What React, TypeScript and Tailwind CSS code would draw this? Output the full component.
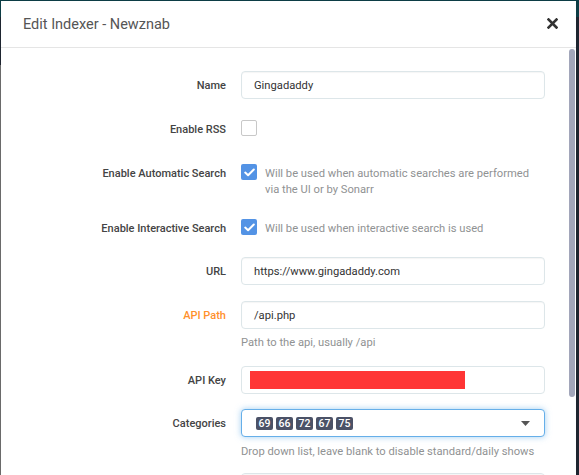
import React from "react";

const font = { fontFamily: "Roboto, 'Liberation Sans', sans-serif" };

function Label({ text, tall = true, orange = false }: { text: string; tall?: boolean; orange?: boolean }) {
  return (
    <div
      className={`w-[224px] shrink-0 pr-[15px] flex justify-end items-center font-medium text-[11px] ${
        tall ? "h-[28px] pt-[3px]" : "h-4 pt-[4px]"
      } ${orange ? "text-[#ff902b]" : "text-[#444]"}`}
    >
      {text}
    </div>
  );
}

function TextInput({ value, children }: { value?: string; children?: React.ReactNode }) {
  return (
    <div className="w-[304px] h-[28px] rounded-[4px] border border-[#dde6e9] shadow-[inset_0_1px_1px_rgba(0,0,0,0.04)] flex items-center px-3 pt-[3px] text-[11.2px] text-[#333] bg-white">
      {value}
      {children}
    </div>
  );
}

function Checkbox({ checked }: { checked: boolean }) {
  if (!checked)
    return <div className="w-4 h-4 shrink-0 rounded-[2px] border border-[#c8c8c8] bg-white" />;
  return (
    <div className="w-4 h-4 shrink-0 rounded-[2px] bg-[#5393e5] flex items-center justify-center">
      <svg width="11" height="9" viewBox="0 0 11 9">
        <path d="M1.2 4.6 L4.1 7.3 L9.8 1.5" fill="none" stroke="#fff" strokeWidth="2" strokeLinecap="round" strokeLinejoin="round" />
      </svg>
    </div>
  );
}

function Help({ text }: { text: string }) {
  return <div className="text-[11.2px] leading-4 text-[#909293]">{text}</div>;
}

export default function App() {
  const categories = ["69", "66", "72", "67", "75"];

  return (
    <div className="relative w-[579px] h-[475px] overflow-hidden bg-[#6a6a6a]" style={font}>
      {/* backdrop */}
      <div className="absolute left-0 top-0 w-full h-[17px] bg-[#0c3d45]" />
      <div className="absolute left-0 top-[17px] w-full h-[48px] bg-[#1e2530]" />
      <div className="absolute right-0 top-[17px] w-[3px] h-[460px] bg-[#1e2530]" />

      {/* modal */}
      <div className="absolute left-[1px] top-[1px] w-[575px] h-[480px] bg-white flex flex-col">
        <div className="h-[47px] shrink-0 border-b border-[#e5e5e5] flex items-center justify-between pl-[22px] pr-[18px]">
          <div className="text-[14.5px] text-[#555] mt-[2px]">Edit Indexer - Newznab</div>
          <svg width="11" height="11" viewBox="0 0 11 11" className="mt-[-1px]">
            <path d="M1.5 1.5 L9.5 9.5 M9.5 1.5 L1.5 9.5" stroke="#333" strokeWidth="2.6" strokeLinecap="square" />
          </svg>
        </div>

        <div className="relative flex-1">
          {/* scrollbar */}
          <div className="absolute right-[1px] top-[1px] w-[6px] h-[348px] rounded-[3px] bg-[#a2a6ba]" />

          <div className="pt-[23px] pl-[16px]">
            <div className="flex">
              <Label text="Name" />
              <TextInput value="Gingadaddy" />
            </div>

            <div className="flex mt-[21px] items-start">
              <Label text="Enable RSS" tall={false} />
              <Checkbox checked={false} />
            </div>

            <div className="flex mt-[28px] items-start">
              <Label text="Enable Automatic Search" tall={false} />
              <Checkbox checked />
              <div className="ml-2 pt-[2px] w-[280px] text-[11.2px] leading-4 text-[#909293]">
                Will be used when automatic searches are performed via the UI or by Sonarr
              </div>
            </div>

            <div className="flex mt-[21px] items-start">
              <Label text="Enable Interactive Search" tall={false} />
              <Checkbox checked />
              <div className="ml-2 pt-[2px] text-[11.2px] leading-4 text-[#909293]">
                Will be used when interactive search is used
              </div>
            </div>

            <div className="flex mt-[20px]">
              <Label text="URL" />
              <TextInput value="https://www.gingadaddy.com" />
            </div>

            <div className="flex mt-[16px]">
              <Label text="API Path" orange />
              <div className="flex flex-col gap-[6px]">
                <TextInput value="/api.php" />
                <Help text="Path to the api, usually /api" />
              </div>
            </div>

            <div className="flex mt-[15px]">
              <Label text="API Key" />
              <div className="w-[304px] h-[28px] rounded-[4px] border border-[#dde6e9] flex items-center pl-2 bg-white">
                <div className="w-[215px] h-[18px] bg-[#ff3535]" />
              </div>
            </div>

            <div className="flex mt-[15px]">
              <Label text="Categories" />
              <div className="flex flex-col gap-[7px]">
                <div className="w-[304px] h-[28px] rounded-[4px] border border-[#66afe9] shadow-[0_0_6px_rgba(102,175,233,0.6)] flex items-center justify-between pl-[14px] pr-[14px] bg-white">
                  <div className="flex gap-[3px]">
                    {categories.map((c) => (
                      <span
                        key={c}
                        className="w-[17px] h-[13px] rounded-[2px] bg-[#4b5267] text-white text-[10.5px] font-medium leading-[13px] text-center"
                      >
                        {c}
                      </span>
                    ))}
                  </div>
                  <svg width="9" height="5" viewBox="0 0 9 5">
                    <path d="M0 0 L9 0 L4.5 5 Z" fill="#555" />
                  </svg>
                </div>
                <Help text="Drop down list, leave blank to disable standard/daily shows" />
              </div>
            </div>

            <div className="flex mt-[13px]">
              <div className="w-[224px] shrink-0" />
              <TextInput />
            </div>
          </div>
        </div>
      </div>
    </div>
  );
}
